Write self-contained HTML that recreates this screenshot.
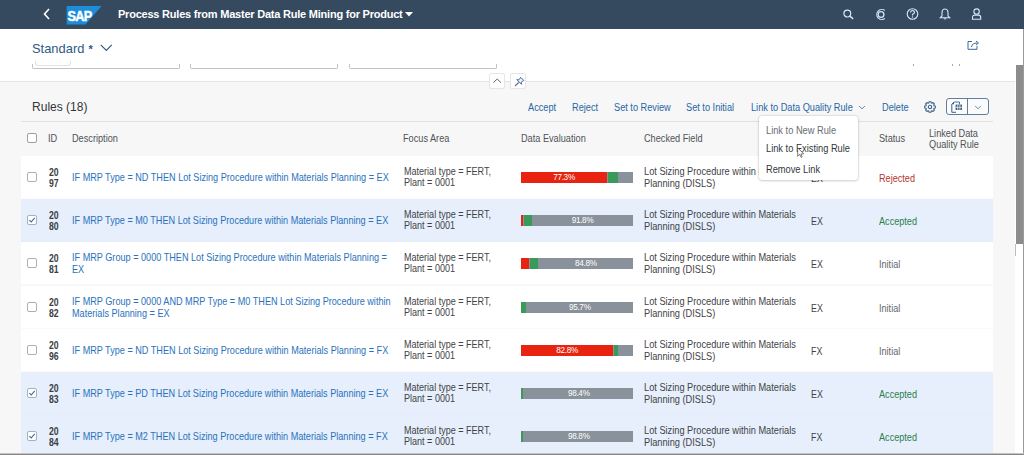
<!DOCTYPE html>
<html><head><meta charset="utf-8">
<style>
*{box-sizing:border-box;margin:0;padding:0}
html,body{width:1024px;height:455px;overflow:hidden}
body{position:relative;background:#f7f7f7;font-family:"Liberation Sans",sans-serif;color:#32363a;font-size:9.2px}
.abs{position:absolute}
.t{position:absolute;white-space:nowrap;line-height:11px}
#shell{left:0;top:0;width:1024px;height:29px;background:#354a5f}
#hdr{left:0;top:29px;width:1024px;height:53px;background:#fff;border-bottom:1px solid #e4e4e4}
.inp{position:absolute;top:64px;height:4.5px;border:1px solid #c2c2c2;border-top:none;border-radius:0 0 2px 2px}
.tbtn{position:absolute;top:101.6px;color:#2866a5;font-size:10px;line-height:12px;white-space:nowrap;transform:scaleX(.92);transform-origin:0 0}
.hd{position:absolute;color:#4f5358;white-space:nowrap;line-height:11.6px;font-size:10.2px;transform:scaleX(.9);transform-origin:0 0}
.row{position:absolute;left:21px;width:972px;height:43px;background:#fff;border-bottom:1px solid rgba(0,0,0,0.02)}
.row.sel{background:#e6effb;border-bottom-color:rgba(0,0,0,0.01)}
.cb{position:absolute;left:6px;top:16px;width:10px;height:10px;border:1px solid #aab0b6;border-radius:2px;background:#fff}
.cb svg{position:absolute;left:-1px;top:-1px}
.id{position:absolute;left:27.5px;top:10.6px;font-weight:bold;line-height:11.2px;font-size:10.2px;color:#3a3e42;transform:scaleX(.85);transform-origin:0 0}
.desc{position:absolute;left:51px;color:#2a72bd;line-height:12.4px;white-space:nowrap;font-size:10.2px;transform:scaleX(.895);transform-origin:0 0}
.fa{position:absolute;left:383px;top:10.4px;line-height:11px;white-space:nowrap;font-size:10.2px;transform:scaleX(.887);transform-origin:0 0;color:#3f4347}
.bar{position:absolute;left:500px;top:16px;width:112px;height:11px;background:#89919a}
.bar i{position:absolute;top:0;height:11px;display:block}
.bar b{position:absolute;top:0.5px;height:10px;font-weight:normal;color:#fff;font-size:8.2px;line-height:10.5px;text-align:center;letter-spacing:-0.3px}
.cf{position:absolute;left:623px;top:9.7px;line-height:12.4px;white-space:nowrap;font-size:10.2px;transform:scaleX(.906);transform-origin:0 0;color:#3f4347}
.ex{position:absolute;left:790px;top:16.6px;line-height:11.5px;font-size:10.2px;color:#3f4347;transform:scaleX(.87);transform-origin:0 0}
.st{position:absolute;left:858px;top:16.6px;line-height:11.5px;font-size:10.2px;color:#64686c;transform:scaleX(.894);transform-origin:0 0}
.acc{color:#2b7f4c}.rej{color:#b5362a}
.R{background:#e8230f}.G{background:#3a9a5a}

.pm{font-size:10.2px;line-height:12px;transform:scaleX(.91);transform-origin:0 0}

</style></head><body>
<div id="shell" class="abs">
 <svg class="abs" style="left:42px;top:8px" width="10" height="12" viewBox="0 0 10 12"><path d="M7 1 L2.5 6 L7 11" fill="none" stroke="#fff" stroke-width="1.6"/></svg>
 <svg class="abs" style="left:66px;top:6px" width="37" height="19" viewBox="0 0 37 19"><path d="M0.7 0 H35.6 L19.6 18.4 H0.7 Z" fill="#1b8ddb"/><g transform="translate(1.5,0) scale(0.82,1)"><text x="0" y="14.6" font-family="Liberation Sans" font-weight="bold" font-size="15.5" fill="#fff" letter-spacing="-0.8" stroke="#fff" stroke-width="0.5">SAP</text></g></svg>
 <div class="t" style="left:118px;top:8px;color:#fff;font-weight:bold;font-size:11px;line-height:13px;letter-spacing:-0.22px">Process Rules from Master Data Rule Mining for Product</div>
 <svg class="abs" style="left:405px;top:12px" width="8" height="5" viewBox="0 0 8 5"><path d="M0 0 H8 L4 4.5 Z" fill="#fff"/></svg>
 <!-- search -->
 <svg class="abs" style="left:842px;top:9px" width="13" height="11" viewBox="0 0 13 11"><circle cx="5.3" cy="4.6" r="3.4" fill="none" stroke="#d1e8ff" stroke-width="1.2"/><path d="M7.8 7.2 L11.2 9.8" stroke="#d1e8ff" stroke-width="1.6"/></svg>
 <!-- copilot -->
 <svg class="abs" style="left:875px;top:8px" width="12" height="13" viewBox="0 0 12 13"><path d="M9.8 2.5 A5 5 0 1 0 9.8 10.5" fill="none" stroke="#d1e8ff" stroke-width="1.1"/><circle cx="6" cy="6.5" r="2.9" fill="none" stroke="#d1e8ff" stroke-width="1.3"/></svg>
 <!-- help -->
 <svg class="abs" style="left:906px;top:8px" width="13" height="12" viewBox="0 0 13 12"><circle cx="6.5" cy="6" r="5.3" fill="none" stroke="#d1e8ff" stroke-width="1.1"/><path d="M4.6 4.5 A1.9 1.9 0 1 1 6.5 6.3 V7.4" fill="none" stroke="#d1e8ff" stroke-width="1.1"/><circle cx="6.5" cy="9" r="0.7" fill="#d1e8ff"/></svg>
 <!-- bell -->
 <svg class="abs" style="left:939px;top:8px" width="12" height="12" viewBox="0 0 12 12"><path d="M6 1 C3.5 1 3 3 3 5 V8 L1.2 9.8 H10.8 L9 8 V5 C9 3 8.5 1 6 1 Z" fill="none" stroke="#d1e8ff" stroke-width="1.1"/><path d="M4.8 10.8 H7.2" stroke="#d1e8ff" stroke-width="1"/></svg>
 <!-- user -->
 <svg class="abs" style="left:971px;top:8px" width="11" height="12" viewBox="0 0 11 12"><circle cx="5.6" cy="3.6" r="2.7" fill="none" stroke="#d1e8ff" stroke-width="1.1"/><path d="M1.5 11.2 V9.4 C1.5 8 2.4 7.1 3.8 7.1 H7.4 C8.8 7.1 9.7 8 9.7 9.4 V11.2 Z" fill="none" stroke="#d1e8ff" stroke-width="1.1"/></svg>
</div>
<div id="hdr" class="abs">
 <div class="t" style="left:32px;top:12px;color:#2e5a84;font-size:13.5px;line-height:16px;transform:scaleX(.956);transform-origin:0 0">Standard</div>
 <div class="t" style="left:88.5px;top:13px;color:#2e5a84;font-size:11px;line-height:14px;font-weight:bold">*</div>
 <svg class="abs" style="left:100px;top:15px" width="13" height="8" viewBox="0 0 13 8"><path d="M0.8 0.8 L6.3 6.3 L11.8 0.8" fill="none" stroke="#2e5a84" stroke-width="1.2"/></svg>
 <svg class="abs" style="left:967px;top:11px" width="13" height="10" viewBox="0 0 13 10"><path d="M5 1.5 H1 V9.3 H10 V6" fill="none" stroke="#3d6a98" stroke-width="1"/><path d="M4.5 7 C5 4 7 3 10 3" fill="none" stroke="#3d6a98" stroke-width="1"/><path d="M9 1 L11.5 3 L9 5" fill="none" stroke="#3d6a98" stroke-width="1"/></svg>
</div>
<div class="inp" style="left:32px;width:148px"></div>
<div class="abs" style="left:35px;top:61px;width:36px;height:5px;border:1px solid #e2e2e2;border-top:none;border-radius:0 0 3px 3px"></div>
<div class="inp" style="left:190px;width:148px"></div>
<div class="inp" style="left:349px;width:148px"></div>
<div class="abs" style="left:913px;top:64px;width:1px;height:1.5px;background:#a8a8a8"></div><div class="abs" style="left:952px;top:64px;width:1px;height:1.5px;background:#a8a8a8"></div><div class="abs" style="left:959px;top:64px;width:1px;height:1.5px;background:#a8a8a8"></div>
<!-- collapse / pin -->
<div class="abs" style="left:489px;top:73px;width:16px;height:16px;background:#fff;border:1px solid #e6e6e6;border-radius:2px"><svg class="abs" style="left:3px;top:4px" width="9" height="6" viewBox="0 0 9 6"><path d="M0.5 4.6 L4.2 1 L7.9 4.6" fill="none" stroke="#46698e" stroke-width="1"/></svg></div>
<div class="abs" style="left:510px;top:73px;width:16px;height:16px;background:#fff;border:1px solid #e6e6e6;border-radius:2px"><svg class="abs" style="left:2px;top:2px" width="12" height="12" viewBox="0 0 12 12"><path d="M7.6 1.3 L10.8 4.5 L9.3 5.2 L8.2 6.9 L8.5 8.3 L3.8 3.6 L5.2 3.9 L6.9 2.8 Z" fill="#eef3f8" stroke="#46698e" stroke-width="1" stroke-linejoin="round"/><path d="M5.6 6.5 L2 10.1" stroke="#46698e" stroke-width="1.1"/></svg></div>
<!-- toolbar -->
<div class="t" style="left:31.5px;top:99.5px;font-size:12.8px;line-height:14px;color:#32363a;transform:scaleX(.94);transform-origin:0 0">Rules (18)</div>
<div class="tbtn" style="left:527.5px">Accept</div>
<div class="tbtn" style="left:572px">Reject</div>
<div class="tbtn" style="left:613.5px">Set to Review</div>
<div class="tbtn" style="left:686px">Set to Initial</div>
<div class="tbtn" style="left:751px">Link to Data Quality Rule</div>
<svg class="abs" style="left:858px;top:105px" width="8" height="5" viewBox="0 0 8 5"><path d="M1 1 L4 3.8 L7 1" fill="none" stroke="#5a7ea6" stroke-width="0.9"/></svg>
<div class="tbtn" style="left:882px">Delete</div>
<svg class="abs" style="left:924px;top:101px" width="12" height="12" viewBox="0 0 12 12"><path d="M11.32 5.09 L11.32 6.91 L10.01 7.24 L9.72 7.96 L10.41 9.12 L9.12 10.41 L7.96 9.71 L7.24 10.01 L6.91 11.32 L5.09 11.32 L4.76 10.01 L4.04 9.72 L2.88 10.41 L1.59 9.12 L2.29 7.96 L1.99 7.24 L0.68 6.91 L0.68 5.09 L1.99 4.76 L2.28 4.04 L1.59 2.88 L2.88 1.59 L4.04 2.29 L4.76 1.99 L5.09 0.68 L6.91 0.68 L7.24 1.99 L7.96 2.28 L9.12 1.59 L10.41 2.88 L9.71 4.04 L10.01 4.76 Z" fill="none" stroke="#3d628a" stroke-width="1.1" stroke-linejoin="round"/><circle cx="6" cy="6" r="1.7" fill="none" stroke="#3d628a" stroke-width="1.1"/></svg>
<div class="abs" style="left:946px;top:98px;width:43px;height:17px;border:1px solid #5f7fa2;border-radius:3px;background:#fbfbfb"></div>
<div class="abs" style="left:967px;top:99px;width:1px;height:15px;background:#5f7fa2"></div>
<svg class="abs" style="left:950px;top:100px" width="14" height="14" viewBox="0 0 14 14"><path d="M4 2 L1.8 4.2 V12.3 H6" fill="none" stroke="#3d628a" stroke-width="1"/><path d="M1.8 4.2 L4 2 V4.2 Z" fill="#3d628a"/><path d="M4 2 H9.5 V4.5" fill="none" stroke="#3d628a" stroke-width="0.9"/><rect x="5.6" y="4.6" width="6.4" height="5.4" fill="#3d628a"/><path d="M5.6 7.3 H12 M7.7 4.6 V10 M9.9 4.6 V10" stroke="#fff" stroke-width="0.7"/></svg>
<svg class="abs" style="left:974px;top:105px" width="8" height="5" viewBox="0 0 8 5"><path d="M1 0.8 L4 3.8 L7 0.8" fill="none" stroke="#5f7fa2" stroke-width="0.9"/></svg>
<div class="abs" style="left:21px;top:121px;width:972px;height:1px;background:#e0e0e0"></div>
<!-- table header -->
<div class="abs" style="left:27px;top:133px;width:10px;height:10px;border:1px solid #9aa0a6;border-radius:2px;background:#fff"></div>
<div class="hd" style="left:47.5px;top:132.5px">ID</div>
<div class="hd" style="left:71.5px;top:132.5px">Description</div>
<div class="hd" style="left:403px;top:132.5px">Focus Area</div>
<div class="hd" style="left:520.5px;top:132.5px">Data Evaluation</div>
<div class="hd" style="left:643.5px;top:132.5px">Checked Field</div>
<div class="hd" style="left:879px;top:132.5px">Status</div>
<div class="hd" style="left:928.5px;top:127.5px">Linked Data<br>Quality Rule</div>
<div class="row" style="top:156px"><div class="cb"></div><div class="id">20<br>97</div><div class="desc" style="top:16px">IF MRP Type = ND THEN Lot Sizing Procedure within Materials Planning = EX</div><div class="fa">Material type = FERT,<br>Plant = 0001</div><div class="bar"><i class="R" style="left:0px;width:86px"></i><i class="G" style="left:86.6px;width:10.400000000000006px"></i><b style="left:0px;width:86px">77.3%</b></div><div class="cf">Lot Sizing Procedure within Materials<br>Planning (DISLS)</div><div class="ex">EX</div><div class="st rej">Rejected</div></div>
<div class="row sel" style="top:199px"><div class="cb"><svg width="10" height="10" viewBox="0 0 10 10"><path d="M2.4 5.2 L4.2 7 L7.7 2.9" fill="none" stroke="#2f6aa8" stroke-width="1.1"/></svg></div><div class="id">20<br>80</div><div class="desc" style="top:16px">IF MRP Type = M0 THEN Lot Sizing Procedure within Materials Planning = EX</div><div class="fa">Material type = FERT,<br>Plant = 0001</div><div class="bar"><i class="R" style="left:0px;width:1.8px"></i><i class="G" style="left:3px;width:7.5px"></i><b style="left:11px;width:101px">91.8%</b></div><div class="cf">Lot Sizing Procedure within Materials<br>Planning (DISLS)</div><div class="ex">EX</div><div class="st acc">Accepted</div></div>
<div class="row" style="top:242px"><div class="cb"></div><div class="id">20<br>81</div><div class="desc" style="top:9.6px">IF MRP Group = 0000 THEN Lot Sizing Procedure within Materials Planning =<br>EX</div><div class="fa">Material type = FERT,<br>Plant = 0001</div><div class="bar"><i class="R" style="left:0px;width:7.8px"></i><i class="G" style="left:9px;width:7.5px"></i><b style="left:17.6px;width:94.4px">84.8%</b></div><div class="cf">Lot Sizing Procedure within Materials<br>Planning (DISLS)</div><div class="ex">EX</div><div class="st ">Initial</div></div>
<div class="row" style="top:286px"><div class="cb"></div><div class="id">20<br>82</div><div class="desc" style="top:9.6px">IF MRP Group = 0000 AND MRP Type = M0 THEN Lot Sizing Procedure within<br>Materials Planning = EX</div><div class="fa">Material type = FERT,<br>Plant = 0001</div><div class="bar"><i class="G" style="left:0px;width:5px"></i><b style="left:5.5px;width:106.5px">95.7%</b></div><div class="cf">Lot Sizing Procedure within Materials<br>Planning (DISLS)</div><div class="ex">EX</div><div class="st ">Initial</div></div>
<div class="row" style="top:329px"><div class="cb"></div><div class="id">20<br>96</div><div class="desc" style="top:16px">IF MRP Type = ND THEN Lot Sizing Procedure within Materials Planning = FX</div><div class="fa">Material type = FERT,<br>Plant = 0001</div><div class="bar"><i class="R" style="left:0px;width:92.2px"></i><i class="G" style="left:93px;width:4px"></i><b style="left:0px;width:92.2px">82.8%</b></div><div class="cf">Lot Sizing Procedure within Materials<br>Planning (DISLS)</div><div class="ex">FX</div><div class="st ">Initial</div></div>
<div class="row sel" style="top:372px"><div class="cb"><svg width="10" height="10" viewBox="0 0 10 10"><path d="M2.4 5.2 L4.2 7 L7.7 2.9" fill="none" stroke="#2f6aa8" stroke-width="1.1"/></svg></div><div class="id">20<br>83</div><div class="desc" style="top:16px">IF MRP Type = PD THEN Lot Sizing Procedure within Materials Planning = EX</div><div class="fa">Material type = FERT,<br>Plant = 0001</div><div class="bar"><i class="G" style="left:0px;width:2px"></i><b style="left:3.5px;width:108.5px">98.4%</b></div><div class="cf">Lot Sizing Procedure within Materials<br>Planning (DISLS)</div><div class="ex">EX</div><div class="st acc">Accepted</div></div>
<div class="row sel" style="top:415px"><div class="cb"><svg width="10" height="10" viewBox="0 0 10 10"><path d="M2.4 5.2 L4.2 7 L7.7 2.9" fill="none" stroke="#2f6aa8" stroke-width="1.1"/></svg></div><div class="id">20<br>84</div><div class="desc" style="top:16px">IF MRP Type = M2 THEN Lot Sizing Procedure within Materials Planning = FX</div><div class="fa">Material type = FERT,<br>Plant = 0001</div><div class="bar"><i class="G" style="left:0px;width:2px"></i><b style="left:3.5px;width:108.5px">98.8%</b></div><div class="cf">Lot Sizing Procedure within Materials<br>Planning (DISLS)</div><div class="ex">FX</div><div class="st acc">Accepted</div></div>
<!-- popover -->
<div class="abs" style="left:759px;top:116px;width:99px;height:64px;background:#fff;border-radius:3px;box-shadow:0 0 2px rgba(0,0,0,0.25),0 1px 3px rgba(0,0,0,0.12)">
 <div class="t pm" style="left:7px;top:8.5px;color:#6a6d70">Link to New Rule</div>
 <div class="t pm" style="left:7px;top:27px;color:#32363a">Link to Existing Rule</div>
 <div class="t pm" style="left:7px;top:47.5px;color:#32363a">Remove Link</div>
</div>
<!-- cursor -->
<svg class="abs" style="left:797px;top:147px" width="8" height="11" viewBox="0 0 8 11"><path d="M0.7 0.7 V9.2 L2.6 7.4 L4.1 10.3 L5.2 9.8 L3.9 7 L6.7 6.9 Z" fill="#fff" stroke="#505050" stroke-width="0.75" stroke-linejoin="round"/></svg>
<!-- scrollbar -->
<div class="abs" style="left:1015px;top:64px;width:9px;height:391px;background:#fff"></div>
<div class="abs" style="left:1016px;top:65px;width:7px;height:179px;background:#8c8c8c"></div>
<div class="abs" style="left:1015px;top:244px;width:1px;height:12px;background:#bdbdbd"></div>
<div class="abs" style="left:1023px;top:29px;width:1px;height:426px;background:#9a9a9a"></div>
<div class="abs" style="left:0;top:453px;width:1024px;height:1px;background:#c4c4c4"></div><div class="abs" style="left:0;top:454px;width:1024px;height:1px;background:#858585"></div>
</body></html>
